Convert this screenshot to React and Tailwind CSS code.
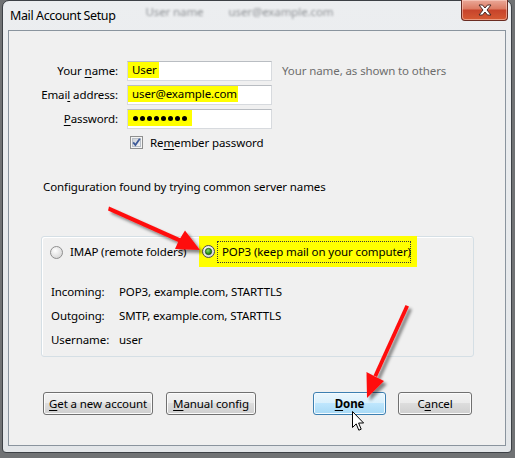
import React from "react";

// Access-key letter, underlined like a Windows mnemonic
const Key = ({ children }) => <span className="underline underline-offset-[2px]">{children}</span>;

const Radio = ({ checked, id }) => (
  <svg width="13" height="13" viewBox="0 0 13 13" className="shrink-0">
    <defs>
      <radialGradient id={`${id}-bg`} cx="0.4" cy="0.35" r="0.7">
        <stop offset="0" stopColor="#ffffff" />
        <stop offset="1" stopColor="#d4d4d4" />
      </radialGradient>
      <radialGradient id={`${id}-dot`} cx="0.4" cy="0.35" r="0.7">
        <stop offset="0" stopColor="#8ee07a" />
        <stop offset="0.6" stopColor="#2f9a1d" />
        <stop offset="1" stopColor="#145e0b" />
      </radialGradient>
    </defs>
    <circle cx="6.5" cy="6.5" r="6" fill={`url(#${id}-bg)`} stroke={checked ? "#4a4a4a" : "#8f8f8f"} />
    {checked && <circle cx="6.5" cy="6.5" r="3.2" fill={`url(#${id}-dot)`} stroke="#1b4d12" strokeWidth="0.7" />}
  </svg>
);

const Checkbox = () => (
  <svg width="13" height="13" viewBox="0 0 13 13" className="shrink-0">
    <defs>
      <linearGradient id="cb-in" x1="0" y1="0" x2="1" y2="1">
        <stop offset="0" stopColor="#cbcfd5" />
        <stop offset="1" stopColor="#f6f6f6" />
      </linearGradient>
    </defs>
    <rect x="0.5" y="0.5" width="12" height="12" fill="#f4f4f4" stroke="#8e8f8f" />
    <rect x="2.5" y="2.5" width="8" height="8" fill="url(#cb-in)" stroke="#b9c0c8" />
    <path d="M3.2 6.4 L5.4 9 L9.8 2.8" stroke="#3d5a98" strokeWidth="1.8" fill="none" />
  </svg>
);

const Button = ({ width, hot, children }) => (
  <button
    className={
      hot
        ? "h-[23px] rounded-[3px] border border-[#3c7fb1] bg-[linear-gradient(to_bottom,#eaf6fd_0%,#d9f0fc_49%,#bee6fd_50%,#a7d9f5_100%)] shadow-[inset_0_0_0_1px_#f4fbff] font-bold text-black"
        : "h-[23px] rounded-[3px] border border-[#707070] bg-[linear-gradient(to_bottom,#f2f2f2_0%,#ebebeb_49%,#dddddd_50%,#cfcfcf_100%)] shadow-[inset_0_0_0_1px_#fbfbfb] text-black"
    }
    style={{ width }}
  >
    {children}
  </button>
);

const Field = ({ label, hint, children }) => (
  <div className="flex h-[20px] items-center">
    <div className="w-[109px] text-right">{label}</div>
    <div className="ml-[9px] flex h-[20px] w-[145px] items-start border border-[#d7dade] border-t-[#b9bdc2] bg-white">
      {children}
    </div>
    {hint && <div className="ml-[10px] text-[#6d6d6d]">{hint}</div>}
  </div>
);

const Detail = ({ label, value }) => (
  <div className="flex h-[24px] items-center pl-[9px]">
    <div className="w-[68px]">{label}</div>
    <div>{value}</div>
  </div>
);

export default function App() {
  return (
    <div className="relative h-[458px] w-[515px] overflow-hidden bg-[#707274] font-['Noto_Sans',sans-serif] text-[11.5px] leading-[16px] tracking-[-0.1px] text-black">
      {/* window frame */}
      <div className="ml-[2px] flex h-[453px] w-[510px] flex-col rounded-t-[7px] rounded-b-[4px] border border-[#3d4146] bg-[linear-gradient(to_bottom,#eceef0,#e3e6e9)] px-[5px]">
        {/* title bar, with the window behind showing through the glass */}
        <div className="-mx-[5px] flex h-[29px] items-start">
          <div className="ml-[7px] mt-[5px] text-[12.5px] leading-[20px] tracking-[-0.4px] text-black">Mail Account Setup</div>
          <div className="ml-[30px] mt-[3px] text-[#8f9296] blur-[1.2px]">User name</div>
          <div className="ml-[25px] mt-[3px] text-[#8f9296] blur-[1.2px]">user@example.com</div>
          <div className="-mt-[1px] ml-auto mr-[3px] flex h-[21px] w-[47px] items-center justify-center rounded-b-[4px] border border-t-0 border-[#6a2c22] bg-[linear-gradient(to_bottom,#eaa898_0%,#dc7a62_45%,#c7432b_50%,#d65a33_100%)] shadow-[inset_0_0_0_1px_rgba(255,220,210,0.5)]">
            <svg width="16" height="12" viewBox="0 0 16 12">
              <path
                d="M2 1 H5.5 L8 4 L10.5 1 H14 L10 6 L14 11 H10.5 L8 8 L5.5 11 H2 L6 6 Z"
                fill="#ffffff"
                stroke="#4a2a26"
                strokeWidth="1"
                strokeLinejoin="round"
              />
            </svg>
          </div>
        </div>

        {/* client area */}
        <div className="h-[416px] border border-[#8a949e] bg-[#f0f0f0]">
          <div className="flex flex-col gap-[4px] pt-[30px]">
            <Field label={<>Your <Key>n</Key>ame:</>} hint="Your name, as shown to others">
              <div className="flex h-[16px] w-[31px] items-center bg-[#ffff00] pl-[4px]">User</div>
            </Field>
            <Field label={<>Emai<Key>l</Key> address:</>}>
              <div className="flex h-[16px] w-[110px] items-center bg-[#ffff00] pl-[4px]">user@example.com</div>
            </Field>
            <Field label={<><Key>P</Key>assword:</>}>
              <div className="flex h-[16px] w-[64px] items-center gap-[2px] bg-[#ffff00] pl-[5px]">
                {[0, 1, 2, 3, 4, 5, 6, 7].map((i) => (
                  <div key={i} className="h-[5px] w-[5px] rounded-full bg-black" />
                ))}
              </div>
            </Field>
          </div>

          <div className="mt-[7px] flex h-[13px] items-center pl-[121px]">
            <Checkbox />
            <div className="ml-[7px]">Re<Key>m</Key>ember password</div>
          </div>

          <div className="mt-[30px] pl-[34px]">Configuration found by trying common server names</div>

          {/* protocol group */}
          <div className="ml-[32px] mt-[41px] h-[121px] w-[433px] rounded-[3px] border border-[#d5dfe5] shadow-[inset_1px_1px_0_#ffffff]">
            <div className="flex h-[30px]">
              <div className="flex w-[157px] items-center pl-[8px]">
                <Radio id="imap" />
                <div className="ml-[7px] whitespace-nowrap">IMAP (remote folders)</div>
              </div>
              <div className="-mt-[1px] flex h-[31px] w-[218px] items-center bg-[#ffff00] pl-[3px]">
                <Radio id="pop" checked />
                <div className="ml-[2px] flex h-[22px] w-[194px] items-center whitespace-nowrap border border-dotted border-[#3a3a3a] pl-[4px]">
                  POP3 (keep mail on your computer)
                </div>
              </div>
            </div>
            <div className="mt-[13px]">
              <Detail label="Incoming:" value="POP3, example.com, STARTTLS" />
              <Detail label="Outgoing:" value="SMTP, example.com, STARTTLS" />
              <Detail label="Username:" value="user" />
            </div>
          </div>

          <div className="mt-[35px] flex pl-[34px]">
            <Button width={110}><Key>G</Key>et a new account</Button>
            <div className="ml-[13px]">
              <Button width={90}><Key>M</Key>anual config</Button>
            </div>
            <div className="ml-[57px]">
              <Button width={73} hot><Key>D</Key>one</Button>
            </div>
            <div className="ml-[12px]">
              <Button width={74}>C<Key>a</Key>ncel</Button>
            </div>
          </div>
        </div>
      </div>

      {/* red callout arrows */}
      <svg className="pointer-events-none absolute left-0 top-0" width="515" height="458" viewBox="0 0 515 458">
        <defs>
          <filter id="arrow-shadow" x="-20%" y="-20%" width="140%" height="140%">
            <feDropShadow dx="3" dy="3" stdDeviation="1.6" floodColor="#000" floodOpacity="0.45" />
          </filter>
        </defs>
        <g filter="url(#arrow-shadow)" fill="#ff1010" stroke="none">
          <path d="M109 206.5 L182 239 L180.5 243 L108 210.5 Z" />
          <path d="M200 250 L175 249 L178.5 241 L185 230.5 Z" />
          <path d="M405.5 305 L409 306.5 L377 377 L373.5 375.5 Z" />
          <path d="M367 398 L366.5 372 L374 376 L384 381 Z" />
        </g>
      </svg>

      {/* mouse pointer */}
      <svg className="pointer-events-none absolute left-[352px] top-[411px]" width="13" height="21" viewBox="0 0 13 21">
        <path
          d="M0.5 0.5 L0.5 16.5 L4.2 12.9 L6.8 19.2 L9.2 18.2 L6.6 12 L11.6 12 Z"
          fill="#ffffff"
          stroke="#000000"
          strokeWidth="1"
          strokeLinejoin="miter"
        />
      </svg>
    </div>
  );
}
